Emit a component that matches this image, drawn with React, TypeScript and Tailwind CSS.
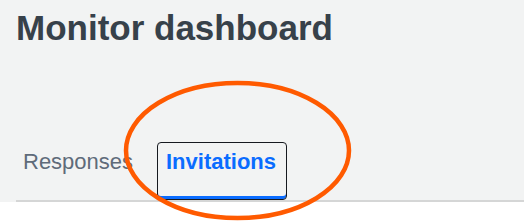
import React from "react";

const App: React.FC = () => {
  return (
    <div className="relative h-[223px] w-full overflow-hidden bg-white font-['Liberation_Sans',Arial,sans-serif]">
      <div className="flex h-[202px] flex-col bg-[#f2f3f3]">
        <h1 className="pl-4 pt-[10px] text-[35px] font-bold leading-[35px] text-[#37414a]">
          Monitor dashboard
        </h1>

        <div className="mt-auto ml-4 flex border-b-2 border-[#d5d6d6]">
          <div className="h-[58px] w-[141px] pl-[7px] pt-[7px] text-[22px] leading-[26px] text-[#5f6b7a]">
            Responses
          </div>
          <div className="h-[58px] w-[130px] rounded-[4px] border border-[#16191f] pl-[8px] pt-[6px] text-[22px] font-bold leading-[26px] text-[#0a6cff] shadow-[inset_0_-3px_0_#0a6cff]">
            Invitations
          </div>
        </div>
      </div>

      {/* annotation ring */}
      <svg className="pointer-events-none absolute left-0 top-0" width="524" height="223">
        <ellipse cx="237.5" cy="150.5" rx="111.5" ry="67.5" fill="none" stroke="#ff5a00" strokeWidth="4.5" />
      </svg>
    </div>
  );
};

export default App;
